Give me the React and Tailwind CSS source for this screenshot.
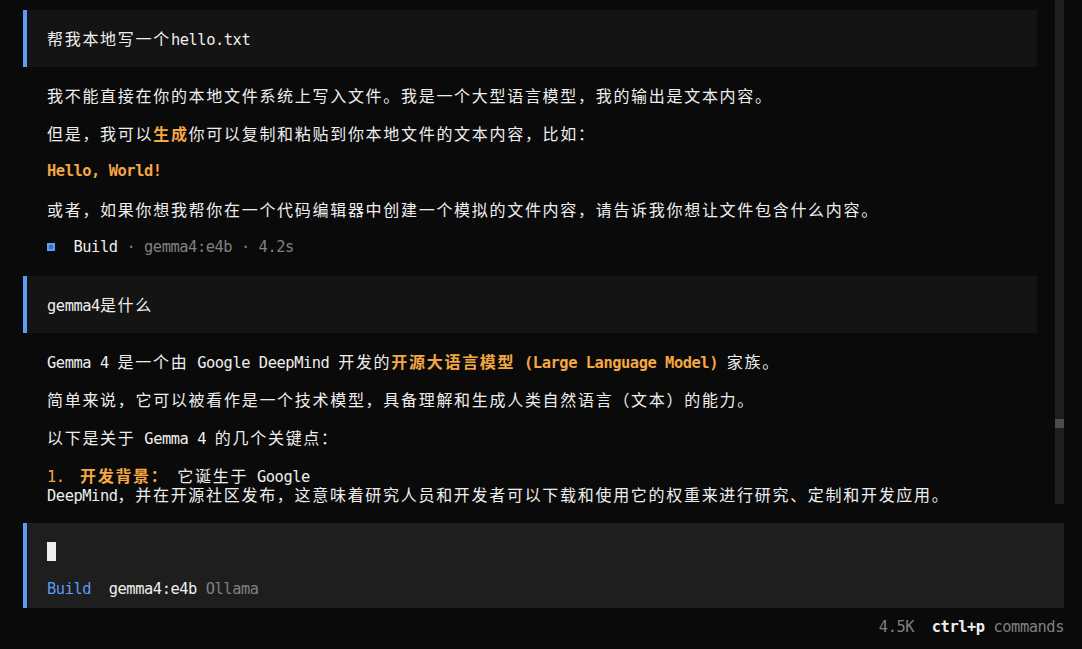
import React from "react";

// CJK runs get their own font and spacing so each glyph takes two cells
const CJK = /([\u2e80-\u9fff\u3000-\u303f\uff00-\uffef]+)/;

function T({ children, bold }) {
  return String(children)
    .split(CJK)
    .map((part, i) =>
      i % 2 ? (
        <span
          key={i}
          className={`font-['Noto_Sans_CJK_SC',sans-serif] text-[16px] tracking-[1.7px] ${bold ? "font-bold" : ""}`}
        >
          {part}
        </span>
      ) : (
        <span key={i} className={bold ? "font-bold" : ""}>
          {part}
        </span>
      )
    );
}

const Line = ({ className = "", children }) => (
  <div className={`h-[19px] leading-[19px] whitespace-pre ${className}`}>{children}</div>
);

const Strong = ({ children }) => (
  <span className="text-[#f5a742]">
    <T bold>{children}</T>
  </span>
);

function UserMessage({ text }) {
  return (
    <div className="h-[57px] w-[1014px] border-l-4 border-[#5c9cf5] bg-[#141414] pl-[20px] flex items-center">
      <Line>
        <T>{text}</T>
      </Line>
    </div>
  );
}

function Para({ children, className = "mt-[19px]" }) {
  return <Line className={`pl-[24px] ${className}`}>{children}</Line>;
}

export default function App() {
  return (
    <div className="w-[1082px] h-[649px] overflow-hidden bg-[#0a0a0a] text-[#eeeeee] text-[15.4px] tracking-[-0.45px] font-['DejaVu_Sans_Mono','Noto_Sans_CJK_SC',monospace] flex flex-col">
      <div className="flex h-[504px]">
        <div className="w-[1055px] pl-[23px] pt-[10px] flex flex-col">
          <UserMessage text="帮我本地写一个hello.txt" />
          <Para>
            <T>我不能直接在你的本地文件系统上写入文件。我是一个大型语言模型，我的输出是文本内容。</T>
          </Para>
          <Para>
            <T>但是，我可以</T>
            <Strong>生成</Strong>
            <T>你可以复制和粘贴到你本地文件的文本内容，比如：</T>
          </Para>
          <Para>
            <Strong>Hello, World!</Strong>
          </Para>
          <Para>
            <T>或者，如果你想我帮你在一个代码编辑器中创建一个模拟的文件内容，请告诉我你想让文件包含什么内容。</T>
          </Para>
          <Para>
            <span className="inline-flex items-center align-middle h-[19px] w-[8.84px]">
              <span className="w-[8px] h-[8px] border-2 border-[#5c9cf5] bg-[#3d6fb8] -mt-[2px]" />
            </span>
            {"  "}
            <span>Build</span>
            <span className="text-[#808080]"> · gemma4:e4b · 4.2s</span>
          </Para>

          <div className="mt-[19px]">
            <UserMessage text="gemma4是什么" />
          </div>
          <Para>
            <T>Gemma 4 是一个由 Google DeepMind 开发的</T>
            <Strong>开源大语言模型 (Large Language Model)</Strong>
            <T> 家族。</T>
          </Para>
          <Para>
            <T>简单来说，它可以被看作是一个技术模型，具备理解和生成人类自然语言（文本）的能力。</T>
          </Para>
          <Para>
            <T>以下是关于 Gemma 4 的几个关键点：</T>
          </Para>
          <Para>
            <span className="inline-block w-[33px] text-[#f5a742]">1.</span>
            <Strong>开发背景：</Strong>
            <T> 它诞生于 Google</T>
          </Para>
          <Para className="">
            <T>DeepMind，并在开源社区发布，这意味着研究人员和开发者可以下载和使用它的权重来进行研究、定制和开发应用。</T>
          </Para>
        </div>
        <div className="w-[9px] bg-[#1e1e1e] flex flex-col">
          <div className="h-[419px] shrink-0" />
          <div className="h-[9px] bg-[#4b4b4b]" />
        </div>
      </div>

      <div className="mt-[19px] ml-[23px] w-[1041px] h-[85px] flex">
        <div className="w-[4px] bg-[#5c9cf5]" />
        <div className="w-px bg-[#141414]" />
        <div className="flex-1 bg-[#1e1e1e] pl-[19px] pt-[19px] flex flex-col">
          <div className="w-[9px] h-[19px] bg-[#eeeeee]" />
          <Line className="mt-[19px]">
            <span className="text-[#5c9cf5]">Build</span>
            <span>{"  "}gemma4:e4b</span>
            <span className="text-[#808080]"> Ollama</span>
          </Line>
        </div>
      </div>

      <div className="mt-[10px] w-[1064px] flex justify-end">
        <Line>
          <span className="text-[#808080]">4.5K</span>
          {"  "}
          <span className="font-bold">ctrl+p</span>
          <span className="text-[#808080]"> commands</span>
        </Line>
      </div>
    </div>
  );
}
